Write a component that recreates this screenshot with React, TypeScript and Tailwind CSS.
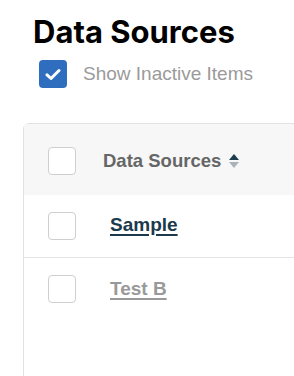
import React from "react";

const rows = [
  { name: "Sample", active: true },
  { name: "Test B", active: false },
];

function Box({ checked = false }: { checked?: boolean }) {
  if (checked) {
    return (
      <span className="flex h-[28px] w-[28px] items-center justify-center rounded-[4px] bg-[#2f6dbf]">
        <svg width="16" height="13" viewBox="0 0 16 13" fill="none">
          <path d="M2 6.8 L6 10.5 L14 2.5" stroke="white" strokeWidth="3" strokeLinecap="round" strokeLinejoin="round" />
        </svg>
      </span>
    );
  }
  return <span className="block h-[28px] w-[28px] shrink-0 rounded-[4px] border border-[#cfcfcf] bg-white" />;
}

export default function App() {
  return (
    <div className="h-[376px] w-[294px] overflow-hidden bg-white" style={{ fontFamily: "'Liberation Sans', Arial, sans-serif" }}>
      <h1 className="pl-[33px] pt-[14px] text-[31px] font-bold leading-[36px] text-black" style={{ fontFamily: "Inter, 'Noto Sans', sans-serif" }}>
        Data Sources
      </h1>
      <label className="mt-[10px] flex items-center gap-[16px] pl-[39px]">
        <Box checked />
        <span className="text-[19px] text-[#9a9a9a]">Show Inactive Items</span>
      </label>

      <div className="ml-[23px] mt-[34px] h-[260px] rounded-tl-[6px] border-l border-t border-[#e2e2e2]">
        <div className="flex h-[71px] items-start gap-[27px] bg-[#f7f7f7] pl-[24px] pt-[23px]">
          <Box />
          <div className="flex h-[28px] items-center gap-[7px]">
            <span className="text-[18.5px] font-bold text-[#666666]">Data Sources</span>
            <svg width="12" height="18" viewBox="0 0 12 18">
              <path d="M6 2 L11 8 L1 8 Z" fill="#1c3d4d" />
              <path d="M1 10 L11 10 L6 16 Z" fill="#a9b3b8" />
            </svg>
          </div>
        </div>
        {rows.map((r) => (
          <div key={r.name} className="flex h-[63px] items-center gap-[34px] border-b border-[#e5e5e5] pl-[24px] last:border-b-0">
            <Box />
            <a href="#" className={`text-[19px] font-bold underline decoration-[2px] underline-offset-[3px] ${r.active ? "text-[#1b3a4b]" : "text-[#999999]"}`}>
              {r.name}
            </a>
          </div>
        ))}
      </div>
    </div>
  );
}
